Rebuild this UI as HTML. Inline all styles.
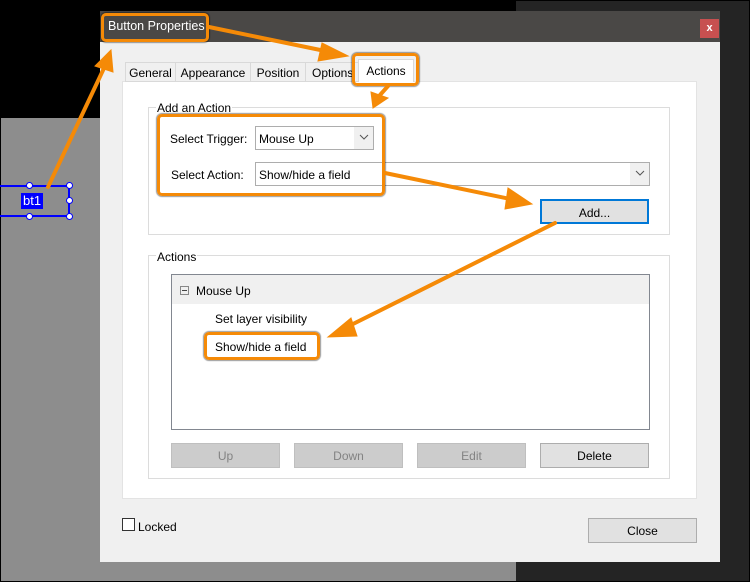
<!DOCTYPE html>
<html><head><meta charset="utf-8"><style>
*{box-sizing:border-box;margin:0;padding:0}
body{width:750px;height:582px;position:relative;overflow:hidden;background:#000;font-family:"Liberation Sans",sans-serif;font-size:12px;color:#000}
.a{position:absolute}
.t{position:absolute;white-space:nowrap}
.btn{position:absolute;background:#e1e1e1;border:1px solid #adadad;text-align:center;line-height:24px}
.dis{background:#ccc;border-color:#bfbfbf;color:#838383}
.ob{position:absolute;border:3px solid #f58a07;border-radius:5px;box-shadow:0 0 1px 1px rgba(0,0,0,.4)}
</style></head><body>
<div class="a" style="left:1px;top:118px;width:515px;height:463px;background:#8d8d8d"></div>
<div class="a" style="left:516px;top:1px;width:233px;height:580px;background:#242424"></div>
<div class="a" style="left:0;top:185px;width:70px;height:32px;border:2px solid #0000ff;border-left:none"></div>
<div class="t" style="left:21px;top:193px;background:#0000ff;color:#fff;font-size:13px;padding:0 2px;line-height:16px">bt1</div>
<div class="a" style="left:26px;top:182px;width:7px;height:7px;border-radius:50%;background:#fff;border:1.5px solid #00f"></div>
<div class="a" style="left:66px;top:182px;width:7px;height:7px;border-radius:50%;background:#fff;border:1.5px solid #00f"></div>
<div class="a" style="left:66px;top:197px;width:7px;height:7px;border-radius:50%;background:#fff;border:1.5px solid #00f"></div>
<div class="a" style="left:26px;top:213px;width:7px;height:7px;border-radius:50%;background:#fff;border:1.5px solid #00f"></div>
<div class="a" style="left:66px;top:213px;width:7px;height:7px;border-radius:50%;background:#fff;border:1.5px solid #00f"></div>
<div class="a" style="left:100px;top:11px;width:620px;height:551px;background:#f0f0f0"></div>
<div class="a" style="left:100px;top:11px;width:620px;height:31px;background:#4a4846"></div>
<div class="t" style="left:108px;top:19px;color:#fff;font-size:12.5px">Button Properties</div>
<div class="a" style="left:700px;top:19px;width:19px;height:19px;background:#c75050;color:#fff;font-size:11px;text-align:center;line-height:18px;font-weight:bold">x</div>
<div class="a" style="left:122px;top:81px;width:575px;height:418px;background:#fff;border:1px solid #e3e3e3"></div>
<div class="t" style="left:125px;top:62px;width:51px;height:20px;border:1px solid #d9d9d9;background:#f0f0f0;line-height:20px;text-align:center">General</div>
<div class="t" style="left:175px;top:62px;width:76px;height:20px;border:1px solid #d9d9d9;background:#f0f0f0;line-height:20px;text-align:center">Appearance</div>
<div class="t" style="left:250px;top:62px;width:56px;height:20px;border:1px solid #d9d9d9;background:#f0f0f0;line-height:20px;text-align:center">Position</div>
<div class="t" style="left:305px;top:62px;width:54px;height:20px;border:1px solid #d9d9d9;background:#f0f0f0;line-height:20px;padding-left:6px">Options</div>
<div class="t" style="left:358px;top:59px;width:56px;height:23px;border:1px solid #d9d9d9;border-bottom:none;background:#fff;line-height:22px;text-align:center">Actions</div>
<div class="a" style="left:148px;top:107px;width:522px;height:128px;border:1px solid #dcdcdc"></div>
<div class="t" style="left:156px;top:101px;background:#fff;padding:0 1px">Add an Action</div>
<div class="t" style="left:170px;top:132px">Select Trigger:</div>
<div class="a" style="left:255px;top:126px;width:119px;height:24px;border:1px solid #adadad;background:#fff"></div>
<div class="a" style="left:354px;top:127px;width:19px;height:22px;background:#f0f0f0"></div>
<div class="t" style="left:259px;top:132px">Mouse Up</div>
<svg class="a" style="left:359px;top:134px" width="10" height="7"><path d="M1 1 L5 5 L9 1" stroke="#555" fill="none"/></svg>
<div class="t" style="left:171px;top:168px">Select Action:</div>
<div class="a" style="left:255px;top:162px;width:395px;height:24px;border:1px solid #adadad;background:#fff"></div>
<div class="a" style="left:630px;top:163px;width:19px;height:22px;background:#f0f0f0"></div>
<div class="t" style="left:259px;top:168px">Show/hide a field</div>
<svg class="a" style="left:635px;top:170px" width="10" height="7"><path d="M1 1 L5 5 L9 1" stroke="#555" fill="none"/></svg>
<div class="btn" style="left:540px;top:199px;width:109px;height:25px;border:2px solid #0078d7;line-height:24px">Add...</div>
<div class="a" style="left:148px;top:255px;width:522px;height:224px;border:1px solid #dcdcdc"></div>
<div class="t" style="left:156px;top:250px;background:#fff;padding:0 1px">Actions</div>
<div class="a" style="left:171px;top:274px;width:479px;height:156px;border:1px solid #828790;background:#fff"></div>
<div class="a" style="left:172px;top:275px;width:477px;height:29px;background:#f0f0f0"></div>
<div class="a" style="left:180px;top:286px;width:9px;height:9px;border:1px solid #888"></div>
<div class="a" style="left:182px;top:290px;width:5px;height:1px;background:#444"></div>
<div class="t" style="left:196px;top:284px">Mouse Up</div>
<div class="t" style="left:215px;top:312px">Set layer visibility</div>
<div class="t" style="left:215px;top:340px">Show/hide a field</div>
<div class="btn dis" style="left:171px;top:443px;width:109px;height:25px">Up</div>
<div class="btn dis" style="left:294px;top:443px;width:109px;height:25px">Down</div>
<div class="btn dis" style="left:417px;top:443px;width:109px;height:25px">Edit</div>
<div class="btn" style="left:540px;top:443px;width:109px;height:25px">Delete</div>
<div class="a" style="left:122px;top:518px;width:13px;height:13px;border:1px solid #333;background:#fff"></div>
<div class="t" style="left:138px;top:520px">Locked</div>
<div class="btn" style="left:588px;top:518px;width:109px;height:25px">Close</div>
<div class="ob" style="left:101px;top:13px;width:108px;height:29px"></div>
<div class="ob" style="left:352px;top:53px;width:67px;height:33px"></div>
<div class="ob" style="left:157px;top:114px;width:228px;height:82px"></div>
<div class="ob" style="left:204px;top:332px;width:116px;height:28px"></div>
<svg class="a" style="left:0;top:0" width="750" height="582">
<g stroke="#f58a07" stroke-width="4" fill="#f58a07" stroke-linecap="round">
<line x1="209" y1="27" x2="330" y2="52"/><polygon points="348,56 322,43 318,61" stroke-width="1"/>
<line x1="48" y1="187" x2="105" y2="66"/><polygon points="111,50 95,66 113,72" stroke-width="1"/>
<line x1="388" y1="86" x2="380" y2="95"/><polygon points="373,108 371,92 388,98" stroke-width="1"/>
<line x1="385" y1="173" x2="515" y2="200"/><polygon points="532,204 508,188 505,209" stroke-width="1"/>
<line x1="555" y1="223" x2="345" y2="328"/><polygon points="328,337 351,318 357,336" stroke-width="1"/>
</g></svg>
</body></html>
